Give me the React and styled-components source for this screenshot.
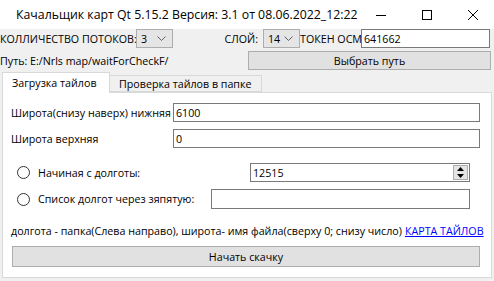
import React from "react";
import styled, { createGlobalStyle } from "styled-components";

const GlobalStyle = createGlobalStyle`
  html, body {
    margin: 0;
    padding: 0;
    background: #f0f0f0;
  }
  body {
    font-family: "Open Sans", "Noto Sans", sans-serif;
    font-size: 10.7px;
    color: #000;
  }
`;

const Window = styled.div`
  width: 494px;
  height: 281px;
  background: #f0f0f0;
  overflow: hidden;
  display: flex;
  flex-direction: column;
`;

const TitleBar = styled.div`
  height: 29px;
  background: #fff;
  display: flex;
  align-items: center;
  padding-left: 8px;
  box-sizing: border-box;
`;

const Title = styled.span`
  margin-left: 8px;
  font-size: 12.3px;
  white-space: nowrap;
`;

const Controls = styled.div`
  margin-left: auto;
  display: flex;
  height: 100%;
`;

const ControlButton = styled.div`
  width: 46px;
  height: 100%;
  display: flex;
  align-items: center;
  justify-content: center;
`;

// top bar with threads / layer / token
const TopRow = styled.div`
  display: grid;
  grid-template-columns: 136px 37px 90px 37px 61px 129px;
  height: 19px;
  align-items: center;
`;

const RowLabel = styled.span`
  white-space: nowrap;
  text-align: ${(p) => (p.right ? "right" : "left")};
  padding-right: ${(p) => (p.right ? "5px" : "0")};
  overflow: hidden;
`;

const Combo = styled.div`
  height: 19px;
  box-sizing: border-box;
  border: 1px solid #adadad;
  background: #e5e5e5;
  display: flex;
  align-items: center;
  padding: 0 6px 0 4px;
  justify-content: space-between;
`;

const LineEdit = styled.div`
  height: ${(p) => p.h || 19}px;
  box-sizing: border-box;
  border: 1px solid #7a7a7a;
  background: #fff;
  display: flex;
  align-items: center;
  padding-left: 2px;
  white-space: nowrap;
`;

const PathRow = styled.div`
  display: grid;
  grid-template-columns: 248px 243px;
  height: 19px;
  margin-top: 3px;
  align-items: center;
`;

const PushButton = styled.div`
  height: ${(p) => p.h || 19}px;
  margin-left: ${(p) => p.ml || 0}px;
  box-sizing: border-box;
  border: 1px solid #adadad;
  background: #e1e1e1;
  display: flex;
  align-items: center;
  justify-content: center;
  white-space: nowrap;
`;

const TabBar = styled.div`
  display: flex;
  align-items: flex-end;
  padding-left: 2px;
  margin-top: 2px;
  height: 20px;
  position: relative;
  z-index: 1;
`;

const Tab = styled.div`
  box-sizing: border-box;
  height: ${(p) => (p.active ? 21 : 17)}px;
  margin-bottom: ${(p) => (p.active ? -1 : 0)}px;
  padding: 0 9px;
  display: flex;
  align-items: center;
  border: 1px solid #d9d9d9;
  border-bottom: ${(p) => (p.active ? "none" : "1px solid #d9d9d9")};
  border-left: ${(p) => (p.first ? "1px solid #d9d9d9" : "none")};
  background: ${(p) => (p.active ? "#fff" : "#f0f0f0")};
  width: ${(p) => p.w}px;
  white-space: nowrap;
`;

const Panel = styled.div`
  margin: 0 2px 0 2px;
  width: 490px;
  height: 186px;
  box-sizing: border-box;
  border: 1px solid #d9d9d9;
  background: #fff;
  padding: 10px 11px 0 8px;
  display: flex;
  flex-direction: column;
`;

const FormRow = styled.div`
  display: grid;
  grid-template-columns: 162px 1fr;
  align-items: center;
  margin-bottom: ${(p) => p.mb || 0}px;
`;

const RadioRow = styled.div`
  display: grid;
  grid-template-columns: ${(p) => p.cols};
  align-items: center;
  margin-right: 10px;
  margin-bottom: ${(p) => p.mb || 0}px;
`;

const RadioLabel = styled.label`
  display: flex;
  align-items: center;
  padding-left: 6px;
  white-space: nowrap;
`;

const RadioCircle = styled.span`
  width: 11px;
  height: 11px;
  border: 1px solid #333;
  border-radius: 50%;
  background: #fff;
  margin-right: 8px;
`;

const SpinBox = styled(LineEdit)`
  justify-content: space-between;
  padding-right: 1px;
`;

const SpinButtons = styled.div`
  width: 15px;
  height: 15px;
  border: 1px solid #adadad;
  background: #e5e5e5;
  box-sizing: border-box;
  display: flex;
  flex-direction: column;
  align-items: center;
  justify-content: space-around;
`;

const Hint = styled.div`
  white-space: nowrap;
  height: 19px;
  display: flex;
  align-items: center;
  margin-bottom: 6px;
`;

const Link = styled.a`
  color: #0000ff;
  text-decoration: underline;
  margin-left: 3px;
`;

const Chevron = () => (
  <svg width="9" height="5" viewBox="0 0 9 5">
    <path d="M0.5 0.5 L4.5 4.5 L8.5 0.5" fill="none" stroke="#606060" strokeWidth="1" />
  </svg>
);

const AppIcon = () => (
  <svg width="13" height="10" viewBox="0 0 13 10">
    <rect x="0" y="0" width="13" height="10" fill="#c9cfd6" />
    <rect x="1" y="1" width="8" height="8" fill="#3c7fb8" />
    <rect x="3" y="4" width="5" height="5" fill="#46a86a" />
    <rect x="10" y="1" width="2" height="8" fill="#eef2f5" />
  </svg>
);

export default function App() {
  return (
    <>
      <GlobalStyle />
      <Window>
        <TitleBar>
          <AppIcon />
          <Title>Качальщик карт Qt 5.15.2 Версия: 3.1 от 08.06.2022_12:22</Title>
          <Controls>
            <ControlButton>
              <svg width="10" height="10" viewBox="0 0 10 10">
                <path d="M0 5.5 H10" stroke="#000" strokeWidth="1" />
              </svg>
            </ControlButton>
            <ControlButton>
              <svg width="10" height="10" viewBox="0 0 10 10">
                <rect x="0.5" y="0.5" width="9" height="9" fill="none" stroke="#000" strokeWidth="1" />
              </svg>
            </ControlButton>
            <ControlButton>
              <svg width="10" height="10" viewBox="0 0 10 10">
                <path d="M0 0 L10 10 M10 0 L0 10" stroke="#000" strokeWidth="1" />
              </svg>
            </ControlButton>
          </Controls>
        </TitleBar>

        <TopRow>
          <RowLabel>КОЛЛИЧЕСТВО ПОТОКОВ:</RowLabel>
          <Combo>
            <span>3</span>
            <Chevron />
          </Combo>
          <RowLabel right>СЛОЙ:</RowLabel>
          <Combo>
            <span>14</span>
            <Chevron />
          </Combo>
          <RowLabel>ТОКЕН ОСМ</RowLabel>
          <LineEdit>641662</LineEdit>
        </TopRow>

        <PathRow>
          <RowLabel>Путь: E:/Nrls map/waitForCheckF/</RowLabel>
          <PushButton>Выбрать путь</PushButton>
        </PathRow>

        <TabBar>
          <Tab active first w={108}>Загрузка тайлов</Tab>
          <Tab w={152}>Проверка тайлов в папке</Tab>
        </TabBar>

        <Panel>
          <FormRow mb={7}>
            <span>Широта(снизу наверх) нижняя</span>
            <LineEdit>6100</LineEdit>
          </FormRow>
          <FormRow mb={15}>
            <span>Широта верхняя</span>
            <LineEdit>0</LineEdit>
          </FormRow>
          <RadioRow cols="239px 1fr" mb={7}>
            <RadioLabel>
              <RadioCircle />
              Начиная с долготы:
            </RadioLabel>
            <SpinBox>
              <span>12515</span>
              <SpinButtons>
                <svg width="7" height="4" viewBox="0 0 7 4">
                  <path d="M0 4 L3.5 0 L7 4 Z" fill="#000" />
                </svg>
                <svg width="7" height="4" viewBox="0 0 7 4">
                  <path d="M0 0 L3.5 4 L7 0 Z" fill="#000" />
                </svg>
              </SpinButtons>
            </SpinBox>
          </RadioRow>
          <RadioRow cols="200px 1fr" mb={12}>
            <RadioLabel>
              <RadioCircle />
              Список долгот через зяпятую:
            </RadioLabel>
            <LineEdit h={20} />
          </RadioRow>
          <Hint>
            долгота - папка(Слева направо), широта- имя файла(сверху 0; снизу число)
            <Link>КАРТА ТАЙЛОВ</Link>
          </Hint>
          <PushButton h={21} ml={1}>Начать скачку</PushButton>
        </Panel>
      </Window>
    </>
  );
}
